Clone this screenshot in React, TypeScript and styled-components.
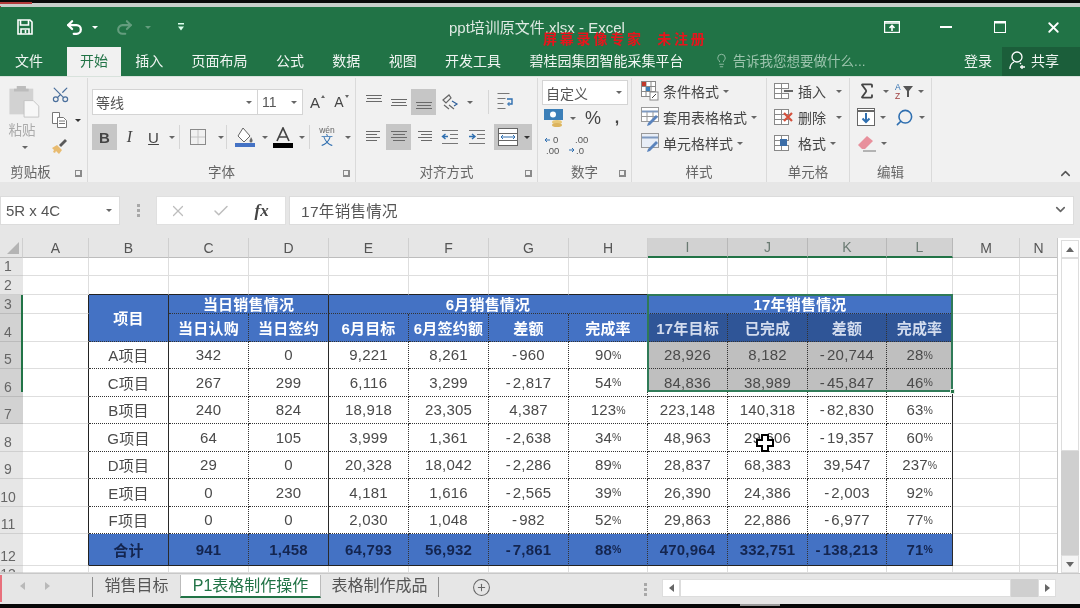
import React from "react";
import styled, { createGlobalStyle } from "styled-components";
import { Undo2, Redo2, Scissors, Sigma, Search, ChevronUp, Lightbulb, CirclePlus, X, Check, ChevronDown } from "lucide-react";

const FONT = `"Liberation Sans","Noto Sans CJK SC",sans-serif`;

const Global = createGlobalStyle`
  html, body { margin: 0; padding: 0; background: #000; }
  * { box-sizing: border-box; }
`;

const Screen = styled.div`
  position: relative; width: 1080px; height: 608px; overflow: hidden;
  display: flex; flex-direction: column; background: #e6e6e6;
  font-family: ${FONT}; filter: blur(0.45px);
`;
const TopEdge = styled.div`height: 3px; background: #0a0a0a; flex: none;`;
const TopGray = styled.div`height: 4px; background: #c9cfcb; flex: none;`;
const RecMark = styled.div`
  position: absolute; background: #b23a3a;
  ${(p: { $side: string }) => p.$side === "top" ? "left:0;top:2px;width:32px;height:2px;" : p.$side === "left" ? "left:0;top:6px;width:1px;height:38px;" : "left:0;top:575px;width:2px;height:27px;background:#e8707c;"}
`;

/* title bar */
const TitleBar = styled.div`
  position: relative; height: 40px; flex: none; background: #217346; color: #fff;
  display: flex; align-items: center; padding-left: 17px;
`;
const QuickBtn = styled.div<{ $w: number; $pl?: number; $dim?: boolean }>`
  width: ${p => p.$w}px; padding-left: ${p => p.$pl ?? 0}px; display: flex; align-items: center; justify-content: center;
  opacity: ${p => (p.$dim ? 0.3 : 1)}; color: #fff;
`;
const WhiteCaret = styled.span`
  width: 0; height: 0; border: 3px solid transparent; border-bottom: none; border-top: 3.5px solid #fff;
`;
const Title = styled.div`
  position: absolute; left: 449px; top: 11px; font-size: 15px; line-height: 20px; color: #dfeae3; white-space: nowrap;
`;
const Watermark = styled.div`
  position: absolute; left: 543px; top: 23px; font-size: 14px; line-height: 18px; font-weight: 700; color: #e8141c;
  letter-spacing: 2.8px; white-space: nowrap;
`;
const WinControls = styled.div`
  margin-left: auto; display: flex; align-items: center; height: 100%;
`;
const WinBtn = styled.div<{ $w: number }>`
  width: ${p => p.$w}px; display: flex; align-items: center; justify-content: center; color: #fff;
`;

/* menu row */
const MenuRow = styled.div`
  height: 29px; flex: none; background: #217346; display: flex; align-items: flex-end; color: #f0f5f2; font-size: 14px;
`;
const MenuTab = styled.div<{ $active?: boolean; $w?: number; $px?: number }>`
  height: 29px; padding: 0 ${p => p.$px ?? 14.2}px 3px; display: flex; align-items: center; white-space: nowrap;
  ${p => (p.$w ? `width: ${p.$w}px;` : "")}
  background: ${p => (p.$active ? "#f1f1f1" : "transparent")};
  color: ${p => (p.$active ? "#217346" : "inherit")};
`;
const TellMe = styled.div`
  margin-left: 16px; display: flex; align-items: center; gap: 4px; height: 29px; padding-bottom: 3px; color: #9cc4ad; font-size: 13.5px; white-space: nowrap;
`;
const Login = styled.div`margin-left: auto; height: 29px; display: flex; align-items: center; padding: 0 10px 3px 0;`;
const Share = styled.div`
  width: 78px; height: 29px; background: #1b5e3a; display: flex; align-items: center; gap: 3px; padding: 0 0 3px 6px;
`;

/* ribbon */
const Ribbon = styled.div`
  height: 106px; flex: none; background: #f1f1f1; display: flex; position: relative; color: #444;
  border-top: 1px solid #d8e2dc; padding-top: 1px;
`;
const Group = styled.div<{ $w: number }>`
  width: ${p => p.$w}px; height: 104px; flex: none; display: flex; flex-direction: column; border-right: 1px solid #dadada;
`;
const GroupBody = styled.div<{ $pt: number; $pl: number; $gap: number; $row?: boolean }>`
  flex: 1; min-height: 0; display: flex; flex-direction: ${p => (p.$row ? "row" : "column")};
  padding: ${p => p.$pt}px 0 0 ${p => p.$pl}px; gap: ${p => p.$gap}px;
`;
const GroupLabel = styled.div<{ $pr?: number }>`
  position: relative; height: 20px; text-align: center; font-size: 13.5px; line-height: 22px; color: #666;
  padding-right: ${p => p.$pr ?? 0}px;
`;
const Launcher = styled.span`
  position: absolute; right: 5px; top: 8px; width: 7px; height: 7px; border: 1px solid #8a8a8a;
  border-right: 2px solid #8a8a8a; border-bottom: 2px solid #8a8a8a;
`;
const Row = styled.div<{ $h?: number }>`
  height: ${p => p.$h ?? 26}px; display: flex; align-items: center; white-space: nowrap;
`;
const Btn = styled.div<{ $w: number; $on?: boolean; $ml?: number; $gap?: number }>`
  width: ${p => p.$w}px; height: 26px; flex: none; display: flex; align-items: center; justify-content: center; gap: ${p => p.$gap ?? 1}px;
  margin-left: ${p => p.$ml ?? 0}px;
  background: ${p => (p.$on ? "#c6c6c6" : "transparent")};
`;
const Caret = styled.span<{ $dark?: boolean }>`
  width: 0; height: 0; flex: none; border: 3px solid transparent; border-bottom: none; border-top: 3.5px solid ${p => (p.$dark ? "#333" : "#666")};
`;
const Divider = styled.span`width: 1px; height: 24px; background: #d6d6d6; flex: none;`;
const Combo = styled.div<{ $w: number; $h?: number; $ml?: number; $pl?: number }>`
  width: ${p => p.$w}px; height: ${p => p.$h ?? 26}px; flex: none; background: #fff; border: 1px solid #d4d4d4;
  margin-left: ${p => p.$ml ?? 0}px;
  display: flex; align-items: center; justify-content: space-between; padding: 0 5px 0 ${p => p.$pl ?? 3}px; font-size: 14px; color: #555;
`;
const Glyph = styled.span<{ $size?: number; $weight?: number; $italic?: boolean; $under?: boolean; $serif?: boolean }>`
  font-size: ${p => p.$size ?? 15}px; font-weight: ${p => p.$weight ?? 400};
  font-style: ${p => (p.$italic ? "italic" : "normal")};
  text-decoration: ${p => (p.$under ? "underline" : "none")};
  font-family: ${p => (p.$serif ? '"Liberation Serif",serif' : "inherit")};
  line-height: 1; color: #444;
`;
const StyleText = styled.span<{ $ml?: number; $mr?: number }>`
  font-size: 14px; color: #444; margin-left: ${p => p.$ml ?? 2}px; margin-right: ${p => p.$mr ?? 4}px;
`;
const PasteCol = styled.div`
  width: 42px; display: flex; flex-direction: column; align-items: center; color: #aaa; font-size: 13.5px; line-height: 18px; padding-top: 5px;
`;
const PasteLabel = styled.span`margin-top: 4px; margin-bottom: 6px; margin-right: 6px;`;
const SideCol = styled.div`display: flex; flex-direction: column; padding-top: 1px;`;
const SideRow = styled.div<{ $blue?: boolean }>`
  height: 26px; display: flex; align-items: center; gap: 6px; padding-left: 5px; color: ${p => (p.$blue ? "#4a6f9c" : "inherit")};
`;
const CutIcon = styled(Scissors)`transform: rotate(-90deg);`;
const FindIcon = styled(Search)`transform: scaleX(-1);`;
const MergeBtn = styled(Btn)`background: #c6c6c6; margin-left: 4px; gap: 5px;`;
const NumRow = styled(Row)``;
const RibbonCollapse = styled.div`
  position: absolute; right: 7px; top: 89px; color: #555; line-height: 0;
`;
const FontSizeBtn = styled.div`
  position: relative; width: 24px; height: 26px; display: flex; align-items: center; justify-content: center; flex: none;
`;
const FontSizeTick = styled.span<{ $down?: boolean }>`
  position: absolute; right: 2px; top: 6px; width: 0; height: 0; border: 2.5px solid transparent;
  ${p => (p.$down ? "border-bottom:none;border-top:3px solid #666;" : "border-top:none;border-bottom:3px solid #666;")}
`;
const PhoneticStack = styled.span`display: flex; flex-direction: column; align-items: center;`;
const PhoneticTop = styled.span`font-size: 8.5px; line-height: 9px; color: #666;`;
const PhoneticBottom = styled.span`font-size: 12px; line-height: 13px; color: #2f6fb0;`;

/* formula bar */
const FormulaGap = styled.div`height: 8px; flex: none; background: #e6e6e6;`;
const FormulaBar = styled.div`
  height: 48px; flex: none; background: #e6e6e6; display: flex; align-items: flex-start; padding-top: 6px;
`;
const NameBox = styled.div`
  width: 120px; height: 29px; background: #fff; border: 1px solid #dcdcdc; display: flex; align-items: center; justify-content: space-between;
  padding: 0 7px 0 5px; font-size: 15px; color: #555;
`;
const FxGrip = styled.div`width: 36px; height: 29px; display: flex; flex-direction: column; align-items: center; justify-content: center; gap: 2px;`;
const GripDot = styled.span`width: 3px; height: 3px; background: #a8a8a8;`;
const FxBox = styled.div`
  width: 130px; height: 29px; background: #fff; border: 1px solid #e0e0e0; display: flex; align-items: center; justify-content: space-around; padding: 0 4px 0 0; color: #bbb;
`;
const FormulaInput = styled.div`
  margin-left: 3px; flex: 1; margin-right: 6px; height: 29px; background: #fff; border: 1px solid #dcdcdc;
  display: flex; align-items: center; justify-content: space-between; padding: 0 5px 2px 11px; font-size: 15.5px; color: #555; letter-spacing: .3px;
`;

/* sheet */
const SheetArea = styled.div`position: relative; height: 335px; flex: none; display: flex; background: #fff;`;
const Grid = styled.div`
  width: 1058px; height: 335px; display: grid; overflow: hidden; background: #fff;
  grid-template-columns: 23px 66px 80px 80px 80px 80px 80px 80px 79px 80px 80px 79px 66px 67px 38px;
  grid-template-rows: 20px 18px 19px 19px 28px 27px 28px 27px 28px 27px 28px 27px 32px 7px;
  border-right: 1px solid #c8c8c8;
`;
const Corner = styled.div`background: #e6e6e6; border-right: 1px solid #cfcfcf; border-bottom: 1px solid #bdbdbd; display: flex; align-items: flex-end; justify-content: flex-end; padding: 0 3px 3px 0;`;
const ColHead = styled.div<{ $sel?: boolean }>`
  background: ${p => (p.$sel ? "#d2d2d2" : "#e6e6e6")};
  border-right: 1px solid ${p => (p.$sel ? "#b8b8b8" : "#cfcfcf")};
  border-bottom: ${p => (p.$sel ? "2px solid #217346" : "1px solid #bdbdbd")};
  display: flex; align-items: center; justify-content: center; font-size: 14px; color: ${p => (p.$sel ? "#6a7a72" : "#555")};
`;
const RowHead = styled.div<{ $sel?: boolean; $clip?: boolean }>`
  background: ${p => (p.$sel ? "#d2d2d2" : "#e6e6e6")}; border-bottom: 1px solid ${p => (p.$sel ? "#bbb" : "#cfcfcf")};
  display: flex; align-items: ${p => (p.$clip ? "flex-start" : "flex-end")}; justify-content: center; padding-right: 7px; font-size: 14px; line-height: 17px; color: #666;
  overflow: hidden; min-height: 0;
`;

type CellKind = "plain" | "head" | "headSel" | "headActive" | "body" | "bodySel" | "bodySelCut" | "total";
const bgFor: Record<CellKind, string> = {
  plain: "#fff", head: "#4472c4", headSel: "#2f5597", headActive: "#4472c4", body: "#fff",
  bodySel: "#bfbfbf", bodySelCut: "linear-gradient(#bfbfbf 0 22px,#fff 22px)", total: "#4472c4",
};
const colorFor: Record<CellKind, string> = {
  plain: "#444", head: "#fff", headSel: "#d3dcee", headActive: "#fff", body: "#4a4a4a",
  bodySel: "#4a4a4a", bodySelCut: "#4a4a4a", total: "#14254f",
};
const Cell = styled.div<{ $kind: CellKind; $cs?: number; $rs?: number; $solidR?: boolean; $solidB?: boolean }>`
  grid-column: span ${p => p.$cs ?? 1}; grid-row: span ${p => p.$rs ?? 1};
  background: ${p => bgFor[p.$kind]}; color: ${p => colorFor[p.$kind]};
  font-size: 15px; font-weight: ${p => (p.$kind === "head" || p.$kind === "headSel" || p.$kind === "headActive" || p.$kind === "total" ? 700 : 400)};
  display: flex; align-items: center; justify-content: center; white-space: nowrap; overflow: hidden; padding-bottom: 1px;
  letter-spacing: .2px;
  border-right: ${p => p.$kind === "plain" ? (p.$solidR ? "1px solid #222" : "1px solid #dedede") : (p.$solidR ? "1px solid #2a2a2a" : "1px dotted #333")};
  border-bottom: ${p => p.$solidB ? "1px solid #222" : p.$kind === "plain" ? "1px solid #dedede" : "1px dotted #333"};
`;
const Pct = styled.span`font-size: 10.5px; font-weight: inherit; letter-spacing: -0.4px;`;
const Minus = styled.span`margin-right: 2px;`;
const Selection = styled.div`
  position: absolute; left: 647px; top: 56px; width: 306px; height: 98px; border: 2px solid #2f7a57; pointer-events: none;
`;
const Handle = styled.div`
  position: absolute; left: 950px; top: 151px; width: 5px; height: 5px; background: #217346; border: 1px solid #e8efe9;
`;
const RowMark = styled.div`
  position: absolute; left: 21px; top: 57px; width: 2px; height: 97px; background: #217346;
`;
const MouseCursor = styled.svg`position: absolute; left: 756px; top: 196px;`;
const VScroll = styled.div`
  width: 18px; margin-left: 3px; margin-top: 2px; height: 333px; display: flex; flex-direction: column; background: #cfcfcf;
`;
const ScrollBtn = styled.div<{ $soft?: boolean }>`
  width: 18px; height: 18px; flex: none; background: ${p => (p.$soft ? "#f4f4f4" : "#fff")}; border: 1px solid #ddd; display: flex; align-items: center; justify-content: center;
`;
const VThumb = styled.div`height: 193px; background: #fff; border: 1px solid #ddd; flex: none;`;
const Spacer = styled.div`flex: 1;`;
const Tri = styled.span<{ $dir: "up" | "down" | "left" | "right" }>`
  width: 0; height: 0; border: 4px solid transparent;
  ${p => p.$dir === "up" ? "border-top:none;border-bottom:5px solid #666;" : p.$dir === "down" ? "border-bottom:none;border-top:5px solid #666;" : p.$dir === "left" ? "border-left:none;border-right:5px solid #666;" : "border-right:none;border-left:5px solid #666;"}
`;

/* bottom */
const TabBar = styled.div`
  height: 31px; flex: none; background: #e6e6e6; display: flex; align-items: flex-start; padding-top: 1px; border-top: 1px solid #c8c8c8; color: #555;
`;
const NavArrows = styled.div`width: 92px; height: 22px; display: flex; align-items: center; justify-content: flex-start; gap: 20px; padding-left: 20px; opacity: .35;`;
const SheetSep = styled.span`width: 1px; height: 20px; background: #8e8e8e; margin-top: 2px; flex: none;`;
const SheetTab = styled.div<{ $active?: boolean; $w: number }>`
  width: ${p => p.$w}px; height: ${p => (p.$active ? 23 : 22)}px; display: flex; align-items: center; justify-content: center; font-size: 16px; white-space: nowrap; flex: none;
  padding-bottom: ${p => (p.$active ? 3 : 5)}px;
  background: ${p => (p.$active ? "#fff" : "transparent")}; color: ${p => (p.$active ? "#217346" : "#555")};
  border-bottom: ${p => (p.$active ? "2px solid #217346" : "none")};
  border-left: ${p => (p.$active ? "1px solid #bbb" : "none")};
  border-right: ${p => (p.$active ? "1px solid #bbb" : "none")};
`;
const AddSheet = styled.div`width: 84px; display: flex; justify-content: center; padding-top: 3px; color: #666; margin-right: 10px;`;
const HSplitter = styled.div`width: 7px; height: 22px; margin: 3px 0 0 109px; display: flex; flex-direction: column; align-items: center; justify-content: center; gap: 2px; flex: none;`;
const HScroll = styled.div`
  margin-left: 13px; margin-top: 4px; width: 394px; height: 18px; display: flex; background: #cfcfcf;
`;
const HThumb = styled.div`width: 331px; background: #fff; border: 1px solid #ddd;`;
const BottomEdge = styled.div`
  height: 5px; flex: none; background: #070707; position: relative;
`;
const BottomChip = styled.div`position: absolute; left: 740px; top: 0; width: 40px; height: 2px; background: #9a9a9a;`;

/* ---------- drawings ---------- */
const Lines = ({ rows, color = "#6a6a6a" }: { rows: [number, number, number][]; color?: string }) => (
  <svg width="18" height="16" viewBox="0 0 18 16" fill="none" stroke={color} strokeWidth="1">
    {rows.map(([a, b, y], i) => <path key={i} d={`M${a} ${y + 0.5}H${b}`} />)}
  </svg>
);
const SaveIcon = () => (
  <svg width="16" height="16" viewBox="0 0 16 16" fill="none" stroke="#fff" strokeWidth="1.6">
    <path d="M1 1h12l2 2v12H1z" /><path d="M3.5 1v5h8V1" /><path d="M4 15v-5h8v5" /><path d="M8.5 11v3" />
  </svg>
);
const PasteIcon = () => (
  <svg width="32" height="33" viewBox="0 0 34 36">
    <rect x="0" y="4" width="26" height="28" fill="#d2d2d2" />
    <path d="M8 4V1h10v3h3v3H5V4z" fill="#bcbcbc" />
    <path d="M16 17h10l6 6v12H16z" fill="#f7f7f7" stroke="#c2c2c2" />
  </svg>
);
const CopyIcon = () => (
  <svg width="18" height="18" viewBox="0 0 18 18" fill="#fff" stroke="#777">
    <path d="M1.5 1.5h7v11h-7z" /><path d="M6.5 6.5h6l3 3v7h-9z" /><path d="M8 10h6M8 12.5h6" fill="none" />
  </svg>
);
const BrushIcon = () => (
  <svg width="18" height="18" viewBox="0 0 18 18">
    <path d="M1 11l5-3 5 5-3 4-3-3-1 2-2-1 1-2z" fill="#e8bb70" />
    <path d="M8 8l6-6 2 2-6 6z" fill="#5a5a5a" />
  </svg>
);
const BorderIcon = () => (
  <svg width="18" height="18" viewBox="0 0 18 18" fill="none" stroke="#8a8a8a">
    <rect x="1.5" y="1.5" width="15" height="15" /><path d="M9 2v14M2 9h14" stroke="#c4c4c4" />
  </svg>
);
const FillIcon = () => (
  <svg width="20" height="20" viewBox="0 0 20 20">
    <path d="M8 1l7 8-6 6-6-6z" fill="#fff" stroke="#666" /><path d="M16 10c1 2 2 3 1.5 4a1.5 1.5 0 0 1-3 0c0-1 1-2 1.500-4z" fill="#6a6a6a" />
    <rect x="0" y="16" width="20" height="4" fill="#4472c4" />
  </svg>
);
const FontColorIcon = () => (
  <svg width="20" height="21" viewBox="0 0 20 21" fill="none">
    <path d="M4 14L10 1l6 13M6.500 10h7" stroke="#444" strokeWidth="1.700" />
    <rect x="0" y="16" width="20" height="5" fill="#000" />
  </svg>
);
const OrientIcon = () => (
  <svg width="18" height="18" viewBox="0 0 18 18" fill="none" stroke="#666" strokeWidth="1.200">
    <path d="M2 7l6-5 2 3-5 5z" /><path d="M3 12l5 4M8 12l5 4" /><path d="M11 8l5 3-3 2" stroke="#2f5f9a" />
  </svg>
);
const WrapIcon = () => (
  <svg width="18" height="20" viewBox="0 0 18 20" fill="none" stroke="#777">
    <path d="M1.500 1.500h12M1.500 6.500h8M1.500 11.500h6M1.500 16.500h8" /><path d="M11 7h5v5h-4" stroke="#2f6fb0" strokeWidth="1.400" /><path d="M13.500 10l-2 2 2 2" stroke="#2f6fb0" />
  </svg>
);
const MergeIcon = () => (
  <svg width="22" height="20" viewBox="0 0 22 20" fill="#fff" stroke="#666">
    <rect x="1.500" y="1.500" width="19" height="17" /><path d="M1 6.500h20M1 13.500h20" /><path d="M4 10h14M6 8l-2 2 2 2M16 8l2 2-2 2" stroke="#2f6fb0" fill="none" />
  </svg>
);
const IndentIcon = ({ flip }: { flip?: boolean }) => (
  <svg width="18" height="16" viewBox="0 0 18 16" fill="none" stroke="#777">
    <path d="M1 1.500h16M9 5.500h8M9 9.500h8M1 14.500h16" />
    {flip
      ? <path d="M1 7.500h5M4 5l3 2.500L4 10" stroke="#2f6fb0" strokeWidth="1.400" />
      : <path d="M7 7.500H2M4.500 5L1.500 7.500 4.500 10" stroke="#2f6fb0" strokeWidth="1.400" />}
  </svg>
);
const MoneyIcon = () => (
  <svg width="20" height="20" viewBox="0 0 20 20">
    <rect x="0" y="1" width="19" height="11" fill="#3c7fb8" /><circle cx="9" cy="6.500" r="3" fill="#fff" />
    <ellipse cx="13" cy="14" rx="5" ry="2" fill="#e8c878" /><ellipse cx="13" cy="17" rx="5" ry="2" fill="#dcb45e" />
  </svg>
);
const Decimal = ({ top, bot, up }: { top: string; bot: string; up?: boolean }) => (
  <svg width="20" height="22" viewBox="0 0 20 22" fontFamily="Liberation Sans" fontSize="9.500" fill="#555">
    <text x={up ? 7 : 9} y="9">{top}</text><text x={up ? 8 : 2} y="20">{bot}</text>
    {up ? <path d="M1 16h5M4 14l2 2-2 2" stroke="#2f6fb0" fill="none" /> : <path d="M1 6h5M3 4L1 6l2 2" stroke="#2f6fb0" fill="none" />}
  </svg>
);
const CondIcon = () => (
  <svg width="18" height="20" viewBox="0 0 18 20" fill="#fff" stroke="#888">
    <rect x=".5" y=".5" width="14" height="15" /><path d="M5 1v14M10 1v14M1 5.500h13M1 10.500h13" />
    <rect x="1" y="1" width="4" height="4" fill="#c0392b" stroke="none" /><rect x="5" y="6" width="4" height="4" fill="#3c7fb8" stroke="none" />
    <rect x="9" y="11" width="8" height="8" /><path d="M11 17l4-4" stroke="#444" />
  </svg>
);
const TableIcon = ({ brush }: { brush?: boolean }) => (
  <svg width="20" height="20" viewBox="0 0 20 20" fill="none" stroke="#999">
    <rect x=".5" y=".5" width="17" height="14" fill={brush ? "#e8eef7" : "#fff"} /><path d="M1 4.500h16" stroke="#7f9ac0" strokeWidth="2" />
    {!brush && <path d="M6 5v9M12 5v9M1 9.500h16" />}
    <path d="M6 19l3-1 8-8-2-2-8 8z" fill="#5b84bd" stroke="none" />
  </svg>
);
const CellIcon = ({ kind }: { kind: "ins" | "del" | "fmt" }) => (
  <svg width="22" height="20" viewBox="0 0 22 20" fill="#fff" stroke="#888">
    <rect x=".5" y="2.500" width="7" height="5" /><rect x="7.500" y="2.500" width="7" height="5" />
    <rect x=".5" y="7.500" width="7" height="5" /><rect x=".5" y="12.500" width="7" height="5" /><rect x="7.500" y="12.500" width="7" height="5" />
    {kind === "ins" && <path d="M10 10h9" stroke="#666" strokeWidth="2" />}
    {kind === "del" && <path d="M10 6l8 8M18 6l-8 8" stroke="#d4503c" strokeWidth="2.200" />}
    {kind === "fmt" && <rect x="6" y="6" width="7" height="7" fill="#3c6ea8" stroke="none" />}
  </svg>
);
const FillDown = () => (
  <svg width="18" height="18" viewBox="0 0 18 18" fill="#fff" stroke="#666">
    <rect x=".5" y=".5" width="17" height="17" /><path d="M1 3h16" strokeWidth="2" /><path d="M9 5v9M5.500 10.500L9 14l3.500-3.500" stroke="#2f6fb0" strokeWidth="2" fill="none" />
  </svg>
);
const SortIcon = () => (
  <svg width="20" height="18" viewBox="0 0 20 18">
    <text x="0" y="8" fontSize="8.500" fontFamily="Liberation Sans" fill="#2f6fb0">A</text>
    <text x="0" y="17" fontSize="8.500" fontFamily="Liberation Sans" fill="#a04040">Z</text>
    <path d="M8 4h10l-4 5v6h-2V9z" fill="#555" />
  </svg>
);
const EraserIcon = () => (
  <svg width="20" height="18" viewBox="0 0 20 18">
    <path d="M1 11l9-9 6 5-8 8H5z" fill="#e8909c" /><path d="M6 17h13" stroke="#777" />
  </svg>
);

/* ---------- data ---------- */
const colNames = ["A", "B", "C", "D", "E", "F", "G", "H", "I", "J", "K", "L", "M", "N"];
const bodyRows: { r: number; cells: string[] }[] = [
  { r: 5, cells: ["A项目", "342", "0", "9,221", "8,261", "-960", "90%", "28,926", "8,182", "-20,744", "28%"] },
  { r: 6, cells: ["C项目", "267", "299", "6,116", "3,299", "-2,817", "54%", "84,836", "38,989", "-45,847", "46%"] },
  { r: 7, cells: ["B项目", "240", "824", "18,918", "23,305", "4,387", "123%", "223,148", "140,318", "-82,830", "63%"] },
  { r: 8, cells: ["G项目", "64", "105", "3,999", "1,361", "-2,638", "34%", "48,963", "29,606", "-19,357", "60%"] },
  { r: 9, cells: ["D项目", "29", "0", "20,328", "18,042", "-2,286", "89%", "28,837", "68,383", "39,547", "237%"] },
  { r: 10, cells: ["E项目", "0", "230", "4,181", "1,616", "-2,565", "39%", "26,390", "24,386", "-2,003", "92%"] },
  { r: 11, cells: ["F项目", "0", "0", "2,030", "1,048", "-982", "52%", "29,863", "22,886", "-6,977", "77%"] },
];
const totals = ["合计", "941", "1,458", "64,793", "56,932", "-7,861", "88%", "470,964", "332,751", "-138,213", "71%"];
const subHeads = ["当日认购", "当日签约", "6月目标", "6月签约额", "差额", "完成率"];
const subHeadsSel = ["17年目标", "已完成", "差额", "完成率"];

const Value = ({ text }: { text: string }) => {
  if (text.endsWith("%")) return <>{text.slice(0, -1)}<Pct>%</Pct></>;
  if (text.startsWith("-")) return <><Minus>-</Minus>{text.slice(1)}</>;
  return <>{text}</>;
};

const solidAfter = (i: number) => i === 0 || i === 2 || i === 10;

const Blank = ({ edge, bottom }: { edge?: boolean; bottom?: boolean }) => (
  <Cell $kind="plain" $solidR={edge} $solidB={bottom} />
);

const Sheet = () => (
  <Grid>
    <Corner><svg width="12" height="12"><path d="M12 0v12H0z" fill="#b4b4b4" /></svg></Corner>
    {colNames.map((c, i) => <ColHead key={c} $sel={i >= 8 && i <= 11}>{c}</ColHead>)}

    <RowHead>1</RowHead>
    {colNames.map(c => <Blank key={c} />)}
    <RowHead>2</RowHead>
    {colNames.map((c, i) => <Blank key={c} bottom={i >= 1 && i <= 11} />)}

    <RowHead $sel>3</RowHead>
    <Blank edge />
    <Cell $kind="head" $rs={2} $solidR>项目</Cell>
    <Cell $kind="head" $cs={2} $solidR>当日销售情况</Cell>
    <Cell $kind="head" $cs={4}>6月销售情况</Cell>
    <Cell $kind="headActive" $cs={4} $solidR>17年销售情况</Cell>
    <Blank /><Blank />

    <RowHead $sel>4</RowHead>
    <Blank edge />
    {subHeads.map((t, i) => <Cell key={t} $kind="head" $solidR={i === 1}>{t}</Cell>)}
    {subHeadsSel.map((t, i) => <Cell key={t} $kind="headSel" $solidR={i === 3}>{t}</Cell>)}
    <Blank /><Blank />

    {bodyRows.map(({ r, cells }) => (
      <React.Fragment key={r}>
        <RowHead $sel={r <= 7}>{r}</RowHead>
        <Blank edge />
        {cells.map((t, i) => (
          <Cell key={i} $solidR={solidAfter(i)}
            $kind={i >= 7 && r === 5 ? "bodySel" : i >= 7 && r === 6 ? "bodySelCut" : "body"}>
            <Value text={t} />
          </Cell>
        ))}
        <Blank /><Blank />
      </React.Fragment>
    ))}

    <RowHead>12</RowHead>
    <Blank edge />
    {totals.map((t, i) => (
      <Cell key={i} $kind="total" $solidR={solidAfter(i)} $solidB><Value text={t} /></Cell>
    ))}
    <Blank /><Blank />

    <RowHead $clip>13</RowHead>
    {colNames.map(c => <Blank key={c} />)}
  </Grid>
);

const AlignRow1: [number, number, number][][] = [
  [[1, 17, 1], [2, 16, 4], [1, 17, 7]],
  [[1, 17, 5], [2, 16, 8], [1, 17, 11]],
  [[1, 17, 8], [2, 16, 11], [1, 17, 14]],
];

export default function App() {
  return (
    <Screen>
      <Global />
      <TopEdge />
      <TopGray />
      <RecMark $side="top" />
      <RecMark $side="left" />
      <RecMark $side="bottom" />

      <TitleBar>
        <QuickBtn $w={16}><SaveIcon /></QuickBtn>
        <QuickBtn $w={52} $pl={30}><Undo2 size={19} strokeWidth={2.8} /></QuickBtn>
        <QuickBtn $w={20}><WhiteCaret /></QuickBtn>
        <QuickBtn $w={38} $dim><Redo2 size={19} strokeWidth={2.6} /></QuickBtn>
        <QuickBtn $w={10} $dim><WhiteCaret /></QuickBtn>
        <QuickBtn $w={56}>
          <svg width="6" height="8" viewBox="0 0 6 8" fill="#dfe"><path d="M0 0h6v1.500H0zM0 3.500h6L3 7.500z" /></svg>
        </QuickBtn>
        <Title>ppt培训原文件.xlsx - Excel</Title>
        <Watermark>屏幕录像专家&nbsp;&nbsp;未注册</Watermark>
        <WinControls>
          <WinBtn $w={54}>
            <svg width="16" height="12" viewBox="0 0 16 12" fill="none" stroke="#fff" strokeWidth="1.200">
              <rect x=".6" y=".6" width="14.800" height="10.800" /><path d="M1 2h14" strokeWidth="1.500" /><path d="M8 10V4.500M5.500 7L8 4.500 10.500 7" strokeWidth="1.600" />
            </svg>
          </WinBtn>
          <WinBtn $w={54}><svg width="12" height="2"><rect width="12" height="2" fill="#fff" /></svg></WinBtn>
          <WinBtn $w={54}><svg width="12" height="12" fill="none" stroke="#fff"><rect x=".5" y=".5" width="11" height="11" /><path d="M0 1.500h12" strokeWidth="2" /></svg></WinBtn>
          <WinBtn $w={53}><X size={17} strokeWidth={2.6} /></WinBtn>
        </WinControls>
      </TitleBar>

      <MenuRow>
        <MenuTab $px={15} $w={67}>文件</MenuTab>
        <MenuTab $active $px={13}>开始</MenuTab>
        <MenuTab>插入</MenuTab>
        <MenuTab>页面布局</MenuTab>
        <MenuTab>公式</MenuTab>
        <MenuTab>数据</MenuTab>
        <MenuTab>视图</MenuTab>
        <MenuTab>开发工具</MenuTab>
        <MenuTab>碧桂园集团智能采集平台</MenuTab>
        <TellMe><Lightbulb size={15} strokeWidth={1.4} />告诉我您想要做什么...</TellMe>
        <Login>登录</Login>
        <Share>
          <svg width="20" height="20" viewBox="0 0 20 20" fill="none" stroke="#fff" strokeWidth="1.300">
            <circle cx="9" cy="7" r="5" /><path d="M2 19c0-4 2-6 4-7M12 13l1 1M14 15v4M12 17h5" />
          </svg>
          共享
        </Share>
      </MenuRow>

      <Ribbon>
        <Group $w={88}>
          <GroupBody $row $pt={2} $pl={4} $gap={0}>
            <PasteCol>
              <PasteIcon />
              <PasteLabel>粘贴</PasteLabel>
              <Caret />
            </PasteCol>
            <SideCol>
              <SideRow $blue><CutIcon size={19} strokeWidth={1.5} /></SideRow>
              <SideRow><CopyIcon /><Caret $dark /></SideRow>
              <SideRow><BrushIcon /></SideRow>
            </SideCol>
          </GroupBody>
          <GroupLabel $pr={26}>剪贴板<Launcher /></GroupLabel>
        </Group>

        <Group $w={268}>
          <GroupBody $pt={11} $pl={4} $gap={9}>
            <Row>
              <Combo $w={166}>等线<Caret /></Combo>
              <Combo $w={46} $ml={-1} $pl={4}>11<Caret /></Combo>
              <FontSizeBtn><Glyph $size={15}>A</Glyph><FontSizeTick /></FontSizeBtn>
              <FontSizeBtn><Glyph $size={14}>A</Glyph><FontSizeTick $down /></FontSizeBtn>
            </Row>
            <Row>
              <Btn $w={25} $on><Glyph $weight={700} $size={15}>B</Glyph></Btn>
              <Btn $w={25}><Glyph $italic $size={16} $serif>I</Glyph></Btn>
              <Btn $w={23}><Glyph $under $size={15}>U</Glyph></Btn>
              <Btn $w={14}><Caret /></Btn>
              <Divider />
              <Btn $w={36}><BorderIcon /></Btn>
              <Btn $w={10}><Caret /></Btn>
              <Divider />
              <Btn $w={28} $ml={4}><FillIcon /></Btn>
              <Btn $w={12}><Caret /></Btn>
              <Btn $w={24}><FontColorIcon /></Btn>
              <Btn $w={14}><Caret /></Btn>
              <Divider />
              <Btn $w={30} $ml={2}><PhoneticStack><PhoneticTop>wén</PhoneticTop><PhoneticBottom>文</PhoneticBottom></PhoneticStack></Btn>
              <Btn $w={12}><Caret /></Btn>
            </Row>
          </GroupBody>
          <GroupLabel>字体<Launcher /></GroupLabel>
        </Group>

        <Group $w={182}>
          <GroupBody $pt={11} $pl={5} $gap={9}>
            <Row>
              <Btn $w={25}><Lines rows={AlignRow1[0]} /></Btn>
              <Btn $w={25}><Lines rows={AlignRow1[1]} /></Btn>
              <Btn $w={25} $on><Lines rows={AlignRow1[2]} /></Btn>
              <Btn $w={28}><OrientIcon /></Btn>
              <Btn $w={12}><Caret /></Btn>
              <Btn $w={12} />
              <Divider />
              <Btn $w={32}><WrapIcon /></Btn>
            </Row>
            <Row>
              <Btn $w={25}><Lines rows={[[1, 15, 2], [1, 12, 5], [1, 15, 8], [1, 12, 11]]} /></Btn>
              <Btn $w={25} $on><Lines rows={[[1, 17, 2], [3, 15, 5], [1, 17, 8], [3, 15, 11]]} /></Btn>
              <Btn $w={25}><Lines rows={[[3, 17, 2], [6, 17, 5], [3, 17, 8], [6, 17, 11]]} /></Btn>
              <Btn $w={28}><IndentIcon /></Btn>
              <Btn $w={26}><IndentIcon flip /></Btn>
              <MergeBtn $w={38}><MergeIcon /><Caret $dark /></MergeBtn>
            </Row>
          </GroupBody>
          <GroupLabel>对齐方式<Launcher /></GroupLabel>
        </Group>

        <Group $w={94}>
          <GroupBody $pt={2} $pl={4} $gap={0}>
            <Combo $w={86} $h={25}>自定义<Caret /></Combo>
            <NumRow $h={26}>
              <Btn $w={24}><MoneyIcon /></Btn>
              <Btn $w={14}><Caret /></Btn>
              <Btn $w={26}><Glyph $size={18}>%</Glyph></Btn>
              <Btn $w={22}><Glyph $size={16} $weight={700}>,</Glyph></Btn>
            </NumRow>
            <Row $h={27}>
              <Btn $w={24}><Decimal top="0" bot=".00" /></Btn>
              <Btn $w={24}><Decimal top=".00" bot=".0" up /></Btn>
            </Row>
          </GroupBody>
          <GroupLabel>数字<Launcher /></GroupLabel>
        </Group>

        <Group $w={135}>
          <GroupBody $pt={0} $pl={9} $gap={0}>
            <Row><CondIcon /><StyleText $ml={4}>条件格式</StyleText><Caret /></Row>
            <Row><TableIcon /><StyleText>套用表格格式</StyleText><Caret /></Row>
            <Row><TableIcon brush /><StyleText>单元格样式</StyleText><Caret /></Row>
          </GroupBody>
          <GroupLabel>样式</GroupLabel>
        </Group>

        <Group $w={83}>
          <GroupBody $pt={0} $pl={7} $gap={0}>
            <Row><CellIcon kind="ins" /><StyleText $mr={10}>插入</StyleText><Caret /></Row>
            <Row><CellIcon kind="del" /><StyleText $mr={10}>删除</StyleText><Caret /></Row>
            <Row><CellIcon kind="fmt" /><StyleText>格式</StyleText><Caret /></Row>
          </GroupBody>
          <GroupLabel>单元格</GroupLabel>
        </Group>

        <Group $w={82}>
          <GroupBody $pt={0} $pl={6} $gap={0}>
            <Row>
              <Btn $w={22}><Sigma size={20} strokeWidth={2.200} color="#444" /></Btn>
              <Btn $w={16}><Caret /></Btn>
              <Btn $w={22}><SortIcon /></Btn>
              <Btn $w={10}><Caret /></Btn>
            </Row>
            <Row>
              <Btn $w={20}><FillDown /></Btn>
              <Btn $w={14}><Caret /></Btn>
              <Btn $w={28}><FindIcon size={19} strokeWidth={2} color="#2f6fb0" /></Btn>
              <Btn $w={8}><Caret /></Btn>
            </Row>
            <Row>
              <Btn $w={22}><EraserIcon /></Btn>
              <Btn $w={12}><Caret /></Btn>
            </Row>
          </GroupBody>
          <GroupLabel>编辑</GroupLabel>
        </Group>
        <RibbonCollapse><ChevronUp size={15} strokeWidth={2.4} /></RibbonCollapse>
      </Ribbon>

      <FormulaGap />
      <FormulaBar>
        <NameBox>5R x 4C<Caret /></NameBox>
        <FxGrip><GripDot /><GripDot /><GripDot /></FxGrip>
        <FxBox>
          <X size={18} strokeWidth={1.600} color="#bdbdbd" />
          <Check size={18} strokeWidth={2} color="#bdbdbd" />
          <Glyph $size={17} $italic $weight={700} $serif>fx</Glyph>
        </FxBox>
        <FormulaInput>17年销售情况<ChevronDown size={15} strokeWidth={2.600} color="#666" /></FormulaInput>
      </FormulaBar>

      <SheetArea>
        <Sheet />
        <RowMark />
        <Selection />
        <Handle />
        <MouseCursor width="18" height="18" viewBox="0 0 18 18">
          <path d="M6 1h6v5h5v6h-5v5H6v-5H1V6h5z" fill="#fff" stroke="#000" strokeWidth="2" />
        </MouseCursor>
        <VScroll>
          <ScrollBtn><Tri $dir="up" /></ScrollBtn>
          <VThumb />
          <Spacer />
          <ScrollBtn $soft><Tri $dir="down" /></ScrollBtn>
        </VScroll>
      </SheetArea>

      <TabBar>
        <NavArrows><Tri $dir="left" /><Tri $dir="right" /></NavArrows>
        <SheetSep />
        <SheetTab $w={87}>销售目标</SheetTab>
        <SheetTab $w={141} $active>P1表格制作操作</SheetTab>
        <SheetTab $w={117}>表格制作成品</SheetTab>
        <SheetSep />
        <AddSheet><CirclePlus size={19} strokeWidth={1.300} /></AddSheet>
        <HSplitter><GripDot /><GripDot /><GripDot /></HSplitter>
        <HScroll>
          <ScrollBtn><Tri $dir="left" /></ScrollBtn>
          <HThumb />
          <Spacer />
          <ScrollBtn><Tri $dir="right" /></ScrollBtn>
        </HScroll>
      </TabBar>
      <BottomEdge><BottomChip /></BottomEdge>
    </Screen>
  );
}
